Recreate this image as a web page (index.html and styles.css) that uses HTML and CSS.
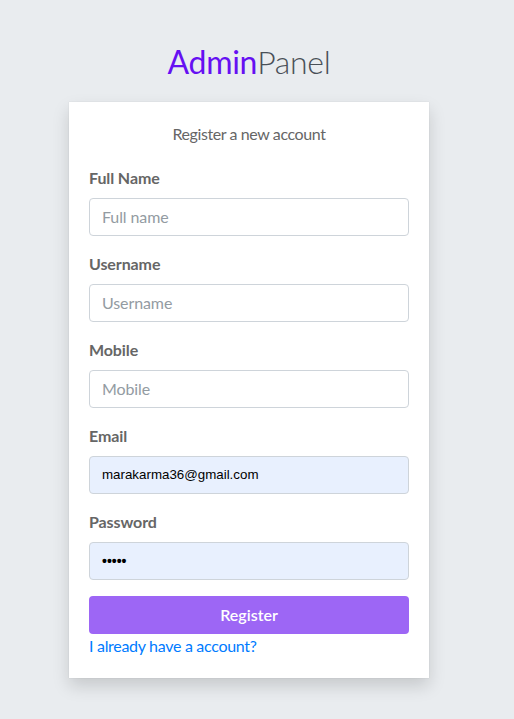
FILE: index.html
```html
<!DOCTYPE html>
<html lang="en">
<head>
<meta charset="utf-8">
<title>AdminPanel | Register</title>
<link rel="stylesheet" href="styles.css">
</head>
<body class="register-page">
  <div class="register-box">
    <div class="register-logo"><span class="logo-strong">Admin</span><span class="logo-light">Panel</span></div>
    <div class="card">
      <div class="card-body">
        <p class="box-msg">Register a new account</p>
        <form class="form">
          <div class="form-group">
            <label class="label">Full Name</label>
            <div class="input">
              <span class="placeholder">Full name</span>
            </div>
          </div>
          <div class="form-group">
            <label class="label">Username</label>
            <div class="input">
              <span class="placeholder">Username</span>
            </div>
          </div>
          <div class="form-group">
            <label class="label">Mobile</label>
            <div class="input">
              <span class="placeholder">Mobile</span>
            </div>
          </div>
          <div class="form-group">
            <label class="label">Email</label>
            <div class="input autofill">
              <span class="value">marakarma36@gmail.com</span>
            </div>
          </div>
          <div class="form-group">
            <label class="label">Password</label>
            <div class="input autofill">
              <span class="dots">•••••</span>
            </div>
          </div>
          <div class="btn">Register</div>
        </form>
        <a class="link" href="#">I already have a account?</a>
      </div>
    </div>
  </div>
</body>
</html>
```
FILE: styles.css
```css
* { box-sizing: border-box; }
html, body { margin: 0; padding: 0; }
body.register-page {
  background: #e9ecef;
  font-family: "Lato", "Source Sans Pro", sans-serif;
  font-size: 16px;
  line-height: 1.5;
  color: #212529;
  min-height: 719px;
  display: flex;
  justify-content: center;
  padding-right: 16px;
}
.register-box {
  width: 360px;
  margin-top: 42px;
}
.register-logo {
  text-align: center;
  font-size: 32px;
  line-height: 40px;
  margin-bottom: 20px;
  letter-spacing: -0.3px;
}
.logo-strong { color: #6610f2; font-weight: 400; }
.logo-light { color: #495057; font-weight: 300; }
.card {
  background: #fff;
  box-shadow: 0 0 1px rgba(0,0,0,.125), 0 8px 16px rgba(0,0,0,.15);
}
.card-body { padding: 20px; }
.box-msg {
  margin: 0;
  padding: 0 20px 20px;
  text-align: center;
  color: #666;
  letter-spacing: -0.4px;
}
.form-group { margin-bottom: 16px; }
.label {
  display: block;
  font-weight: 700;
  color: #666;
  margin-bottom: 8px;
  letter-spacing: -0.1px;
}
.input {
  height: 38px;
  border: 1px solid #ced4da;
  border-radius: 4px;
  padding: 6px 12px;
  display: flex;
  align-items: center;
  background: #fff;
}
.input.autofill { background: #e8f0fe; }
.placeholder { color: #939ba2; letter-spacing: -0.1px; }
.value { font-family: "Liberation Sans", Arial, sans-serif; font-size: 13.333px; color: #000; }
.dots { font-family: "Liberation Sans", Arial, sans-serif; font-size: 14px; font-weight: 700; color: #000; letter-spacing: 0; }
.btn {
  height: 38px;
  background: #9d66f5;
  color: #fff;
  border-radius: 4px;
  display: flex;
  align-items: center;
  justify-content: center;
  font-weight: 600;
}
.link {
  display: block;
  color: #007bff;
  text-decoration: none;
  letter-spacing: -0.3px;
}
```
